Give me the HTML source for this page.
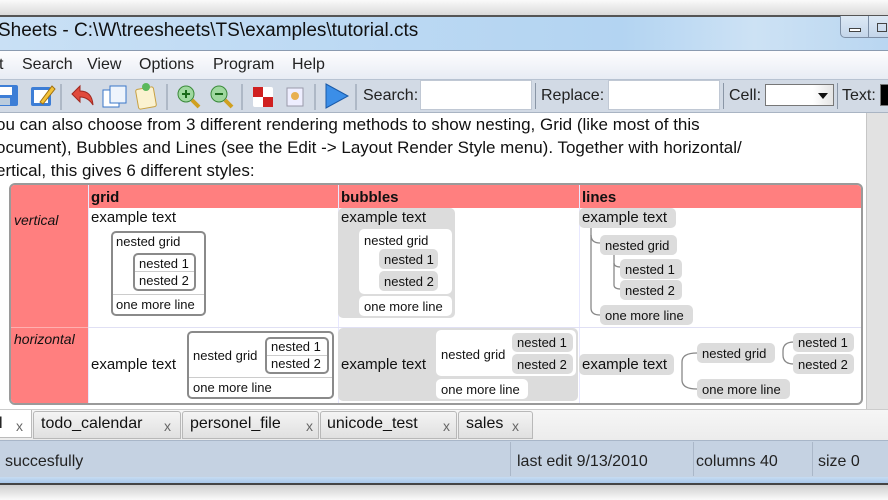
<!DOCTYPE html>
<html><head><meta charset="utf-8"><style>
*{margin:0;padding:0;box-sizing:border-box}
body{width:888px;height:500px;overflow:hidden;background:#fff;font-family:"Liberation Sans",sans-serif;position:relative;color:#111}
.a{position:absolute;white-space:nowrap}
.t13{font-size:13px}
.g{background:#dcdcdc;border-radius:5px}
.w{background:#fff;border-radius:5px}
.lbl{font-size:16px;color:#222}
</style></head><body>
<div class="a" style="left:0;top:0;width:888px;height:16px;background:linear-gradient(#fafafa,#d8d8d8)"></div>
<div class="a" style="left:0;top:15px;width:888px;height:2px;background:#555"></div>
<div class="a" style="left:0;top:17px;width:888px;height:33px;background:linear-gradient(90deg,#c9e0f5 0%,#bcd9f3 40%,#b3d4f2 70%,#cde2f4 85%,#b9d6f1 100%)"></div>
<div class="a" style="left:-2px;top:20px;font-size:19px;color:#111">Sheets - C:\W\treesheets\TS\examples\tutorial.cts</div>
<div class="a" style="left:840px;top:16px;width:60px;height:22px;border:1px solid #7d8fa6;border-top:none;border-radius:0 0 5px 5px;background:linear-gradient(#dde9f5,#c4d6ea)"></div>
<div class="a" style="left:868px;top:16px;width:1px;height:22px;background:#7d8fa6"></div>
<div class="a" style="left:849px;top:28px;width:12px;height:4px;border:1px solid #444;background:#fff"></div>
<div class="a" style="left:877px;top:23px;width:10px;height:9px;border:1px solid #444"></div>
<div class="a" style="left:0;top:50px;width:888px;height:1px;background:#8a9bb0"></div>
<div class="a" style="left:0;top:51px;width:888px;height:28px;background:linear-gradient(#fdfdfe,#e8ecf4)"></div>
<div class="a lbl" style="left:-1px;top:56px">t</div>
<div class="a lbl" style="left:22px;top:56px">Search</div>
<div class="a lbl" style="left:87px;top:56px">View</div>
<div class="a lbl" style="left:139px;top:56px">Options</div>
<div class="a lbl" style="left:213px;top:56px">Program</div>
<div class="a lbl" style="left:292px;top:56px">Help</div>
<div class="a" style="left:0;top:79px;width:888px;height:34px;background:#d2dae5;border-top:1px solid #b8c3d2;border-bottom:1px solid #a9b4c3"></div>
<svg class="a" style="left:0;top:80px" width="360" height="32">
<rect x="-6" y="5" width="24" height="21" rx="2" fill="#3d7ed6"/><rect x="-2" y="7" width="14" height="8" fill="#fff"/><rect x="0" y="18" width="10" height="7" fill="#bcd"/>
<rect x="31" y="7" width="20" height="19" rx="2" fill="#3d7ed6"/><rect x="34" y="10" width="14" height="13" fill="#fff"/><path d="M40 22 L52 6 L55 9 L43 24Z" fill="#f2c23a" stroke="#a07010"/>
<line x1="61" y1="4" x2="61" y2="30" stroke="#8a96a6"/>
<path d="M72 14 L80 6 L80 11 Q92 11 93 25 Q88 17 80 17 L80 22Z" fill="#e04a3c" stroke="#a02820"/>
<rect x="103" y="10" width="16" height="17" fill="#fff" stroke="#3a77c9"/><rect x="110" y="6" width="16" height="17" fill="#eef4fc" stroke="#3a77c9"/>
<rect x="137" y="8" width="18" height="20" rx="2" fill="#fbf2d0" stroke="#c8a040" transform="rotate(-10 146 18)"/><circle cx="146" cy="7" r="4" fill="#5bb85b"/>
<line x1="167" y1="4" x2="167" y2="30" stroke="#8a96a6"/>
<circle cx="186" cy="14" r="8" fill="#9fd89f" stroke="#3a8a3a"/><path d="M182 14h8M186 10v8" stroke="#1a6a1a" stroke-width="2"/><line x1="192" y1="20" x2="199" y2="27" stroke="#d0a020" stroke-width="4"/>
<circle cx="219" cy="14" r="8" fill="#9fd89f" stroke="#3a8a3a"/><path d="M215 14h8" stroke="#1a6a1a" stroke-width="2"/><line x1="225" y1="20" x2="232" y2="27" stroke="#d0a020" stroke-width="4"/>
<line x1="242" y1="4" x2="242" y2="30" stroke="#8a96a6"/>
<rect x="253" y="7" width="20" height="20" rx="2" fill="#fff"/><rect x="253" y="7" width="10" height="10" fill="#d02020"/><rect x="263" y="17" width="10" height="10" fill="#d02020"/>
<rect x="287" y="8" width="16" height="18" fill="#eef" stroke="#99a"/><circle cx="295" cy="16" r="4" fill="#e8b050"/>
<line x1="315" y1="4" x2="315" y2="30" stroke="#8a96a6"/>
<path d="M326 4 L348 16 L326 28Z" fill="#3b8ee8" stroke="#1a5aa8"/>
<line x1="356" y1="4" x2="356" y2="30" stroke="#8a96a6"/>
</svg>
<div class="a lbl" style="left:363px;top:87px">Search:</div>
<div class="a" style="left:420px;top:80px;width:112px;height:30px;background:#fff;border:1px solid #c0c8d4"></div>
<div class="a" style="left:535px;top:83px;width:1px;height:26px;background:#8a96a6"></div>
<div class="a lbl" style="left:541px;top:87px">Replace:</div>
<div class="a" style="left:608px;top:80px;width:112px;height:30px;background:#fff;border:1px solid #c0c8d4"></div>
<div class="a" style="left:723px;top:83px;width:1px;height:26px;background:#8a96a6"></div>
<div class="a lbl" style="left:729px;top:87px">Cell:</div>
<div class="a" style="left:765px;top:84px;width:69px;height:22px;background:linear-gradient(90deg,#fff 70%,#e4e4e4);border:1px solid #777"></div>
<div class="a" style="left:818px;top:93px;border-left:5px solid transparent;border-right:5px solid transparent;border-top:6px solid #111"></div>
<div class="a" style="left:837px;top:83px;width:1px;height:26px;background:#8a96a6"></div>
<div class="a lbl" style="left:842px;top:87px">Text:</div>
<div class="a" style="left:880px;top:84px;width:12px;height:22px;background:#000;border:1px solid #777"></div>
<div class="a" style="left:866px;top:113px;width:22px;height:296px;background:#e2e2e2;border-left:1px solid #c6c6c6"></div>
<div class="a" style="left:-4px;top:113px;font-size:17px;line-height:23px;color:#111">ou can also choose from 3 different rendering methods to show nesting, Grid (like most of this<br>ocument), Bubbles and Lines (see the Edit -&gt; Layout Render Style menu). Together with horizontal/<br>ertical, this gives 6 different styles:</div>
<div class="a" style="left:9px;top:183px;width:854px;height:222px;border:2px solid #9a9a9a;border-radius:6px;overflow:hidden;background:#fff">
 <div class="a" style="left:0;top:0;width:850px;height:23px;background:#ff7f7f"></div>
 <div class="a" style="left:0;top:0;width:77px;height:218px;background:#ff7f7f"></div>
 <div class="a" style="left:77px;top:0;width:1px;height:218px;background:#e8e8ff"></div>
 <div class="a" style="left:327px;top:0;width:1px;height:218px;background:#e8e8ff"></div>
 <div class="a" style="left:568px;top:0;width:1px;height:218px;background:#e8e8ff"></div>
 <div class="a" style="left:77px;top:142px;width:773px;height:1px;background:#e0e0f4"></div>
 <div class="a" style="left:0;top:142px;width:77px;height:1px;background:#ffb0b0"></div>
 <div class="a" style="left:80px;top:4px;font-weight:bold;font-size:15px">grid</div>
 <div class="a" style="left:330px;top:4px;font-weight:bold;font-size:15px">bubbles</div>
 <div class="a" style="left:571px;top:4px;font-weight:bold;font-size:15px">lines</div>
 <div class="a" style="left:3px;top:27px;font-style:italic;font-size:14px">vertical</div>
 <div class="a" style="left:3px;top:146px;font-style:italic;font-size:14px">horizontal</div>
</div>
<div class="a" style="left:91px;top:209px;font-size:15px">example text</div>
<div class="a" style="left:111px;top:231px;width:95px;height:85px;border:2px solid #8a8a8a;border-radius:5px"></div>
<div class="a t13" style="left:116px;top:234px">nested grid</div>
<div class="a" style="left:133px;top:253px;width:63px;height:38px;border:2px solid #8a8a8a;border-radius:5px"></div>
<div class="a" style="left:135px;top:271px;width:59px;height:1px;background:#ccc"></div>
<div class="a t13" style="left:139px;top:256px">nested 1</div>
<div class="a t13" style="left:139px;top:273px">nested 2</div>
<div class="a" style="left:113px;top:294px;width:91px;height:1px;background:#ccc"></div>
<div class="a t13" style="left:116px;top:297px">one more line</div>
<div class="a g" style="left:338px;top:208px;width:117px;height:110px"></div>
<div class="a" style="left:341px;top:209px;font-size:15px">example text</div>
<div class="a w" style="left:359px;top:229px;width:93px;height:65px"></div>
<div class="a t13" style="left:364px;top:233px">nested grid</div>
<div class="a g" style="left:379px;top:249px;width:59px;height:20px"></div>
<div class="a t13" style="left:384px;top:252px">nested 1</div>
<div class="a g" style="left:379px;top:271px;width:59px;height:20px"></div>
<div class="a t13" style="left:384px;top:274px">nested 2</div>
<div class="a w" style="left:359px;top:296px;width:93px;height:20px"></div>
<div class="a t13" style="left:364px;top:299px">one more line</div>
<svg class="a" style="left:570px;top:205px" width="300" height="200" fill="none" stroke="#888" stroke-width="1.3">
<path d="M21 23 V103 Q21 110 30 110"/><path d="M21 30 Q21 38 30 38"/>
<path d="M44 50 V80 Q44 84 51 84"/><path d="M44 58 Q44 62 51 62"/>
<path d="M127 148 Q112 148 112 157 V175 Q112 184 127 184"/>
<path d="M224 137 Q213 137 213 146 V150 Q213 159 224 159"/>
</svg>
<div class="a g" style="left:579px;top:208px;width:97px;height:20px"></div>
<div class="a" style="left:582px;top:209px;font-size:15px">example text</div>
<div class="a g" style="left:600px;top:235px;width:77px;height:20px"></div>
<div class="a t13" style="left:605px;top:238px">nested grid</div>
<div class="a g" style="left:620px;top:259px;width:62px;height:20px"></div>
<div class="a t13" style="left:625px;top:262px">nested 1</div>
<div class="a g" style="left:620px;top:280px;width:62px;height:20px"></div>
<div class="a t13" style="left:625px;top:283px">nested 2</div>
<div class="a g" style="left:600px;top:305px;width:93px;height:20px"></div>
<div class="a t13" style="left:605px;top:308px">one more line</div>
<div class="a" style="left:91px;top:356px;font-size:15px">example text</div>
<div class="a" style="left:187px;top:331px;width:147px;height:68px;border:2px solid #8a8a8a;border-radius:5px"></div>
<div class="a t13" style="left:193px;top:348px">nested grid</div>
<div class="a" style="left:265px;top:337px;width:64px;height:37px;border:2px solid #8a8a8a;border-radius:5px"></div>
<div class="a" style="left:267px;top:355px;width:60px;height:1px;background:#ccc"></div>
<div class="a t13" style="left:271px;top:339px">nested 1</div>
<div class="a t13" style="left:271px;top:356px">nested 2</div>
<div class="a" style="left:189px;top:377px;width:143px;height:1px;background:#ccc"></div>
<div class="a t13" style="left:193px;top:380px">one more line</div>
<div class="a g" style="left:338px;top:328px;width:240px;height:73px"></div>
<div class="a" style="left:341px;top:356px;font-size:15px">example text</div>
<div class="a w" style="left:436px;top:330px;width:140px;height:46px"></div>
<div class="a t13" style="left:441px;top:347px">nested grid</div>
<div class="a g" style="left:512px;top:333px;width:61px;height:19px"></div>
<div class="a t13" style="left:517px;top:335px">nested 1</div>
<div class="a g" style="left:512px;top:354px;width:61px;height:20px"></div>
<div class="a t13" style="left:517px;top:357px">nested 2</div>
<div class="a w" style="left:436px;top:379px;width:92px;height:20px"></div>
<div class="a t13" style="left:441px;top:382px">one more line</div>
<div class="a g" style="left:579px;top:354px;width:95px;height:21px"></div>
<div class="a" style="left:582px;top:356px;font-size:15px">example text</div>
<div class="a g" style="left:697px;top:343px;width:78px;height:20px"></div>
<div class="a t13" style="left:702px;top:346px">nested grid</div>
<div class="a g" style="left:793px;top:333px;width:61px;height:19px"></div>
<div class="a t13" style="left:798px;top:335px">nested 1</div>
<div class="a g" style="left:793px;top:354px;width:61px;height:20px"></div>
<div class="a t13" style="left:798px;top:357px">nested 2</div>
<div class="a g" style="left:697px;top:379px;width:93px;height:20px"></div>
<div class="a t13" style="left:702px;top:382px">one more line</div>
<div class="a" style="left:0;top:409px;width:888px;height:31px;background:linear-gradient(#f6f6f6,#ececec);border-top:1px solid #ccc"></div>
<div class="a" style="left:-2px;top:410px;width:34px;height:28px;background:#fff;border:1px solid #bbb;border-top:none"></div>
<div class="a" style="left:33px;top:411px;width:148px;height:28px;background:linear-gradient(#f4f4f4,#e0e0e0);border:1px solid #b8b8b8;border-radius:3px 3px 0 0"></div>
<div class="a" style="left:182px;top:411px;width:137px;height:28px;background:linear-gradient(#f4f4f4,#e0e0e0);border:1px solid #b8b8b8;border-radius:3px 3px 0 0"></div>
<div class="a" style="left:320px;top:411px;width:137px;height:28px;background:linear-gradient(#f4f4f4,#e0e0e0);border:1px solid #b8b8b8;border-radius:3px 3px 0 0"></div>
<div class="a" style="left:458px;top:411px;width:75px;height:28px;background:linear-gradient(#f4f4f4,#e0e0e0);border:1px solid #b8b8b8;border-radius:3px 3px 0 0"></div>
<div class="a" style="left:-1px;top:415px;font-size:16px">l</div>
<div class="a" style="left:16px;top:418px;font-size:14px;color:#666">x</div>
<div class="a" style="left:41px;top:415px;font-size:16px">todo_calendar</div>
<div class="a" style="left:164px;top:418px;font-size:14px;color:#666">x</div>
<div class="a" style="left:190px;top:415px;font-size:16px">personel_file</div>
<div class="a" style="left:306px;top:418px;font-size:14px;color:#666">x</div>
<div class="a" style="left:327px;top:415px;font-size:16px">unicode_test</div>
<div class="a" style="left:443px;top:418px;font-size:14px;color:#666">x</div>
<div class="a" style="left:466px;top:415px;font-size:16px">sales</div>
<div class="a" style="left:512px;top:418px;font-size:14px;color:#666">x</div>
<div class="a" style="left:0;top:440px;width:888px;height:37px;background:#c5d2e2;border-top:1px solid #a8b6c8"></div>
<div class="a" style="left:510px;top:442px;width:1px;height:34px;background:#aab7c8"></div>
<div class="a" style="left:693px;top:442px;width:1px;height:34px;background:#aab7c8"></div>
<div class="a" style="left:812px;top:442px;width:1px;height:34px;background:#aab7c8"></div>
<div class="a" style="left:5px;top:453px;font-size:16px;color:#222">succesfully</div>
<div class="a" style="left:517px;top:453px;font-size:16px;color:#222">last edit 9/13/2010</div>
<div class="a" style="left:696px;top:453px;font-size:16px;color:#222">columns 40</div>
<div class="a" style="left:818px;top:453px;font-size:16px;color:#222">size 0</div>
<div class="a" style="left:0;top:477px;width:888px;height:6px;background:linear-gradient(#c7dcf2,#a9c7ea)"></div>
<div class="a" style="left:0;top:483px;width:888px;height:2px;background:#444"></div>
<div class="a" style="left:0;top:485px;width:888px;height:15px;background:linear-gradient(#cfcfcf,#fafafa)"></div>
</body></html>
